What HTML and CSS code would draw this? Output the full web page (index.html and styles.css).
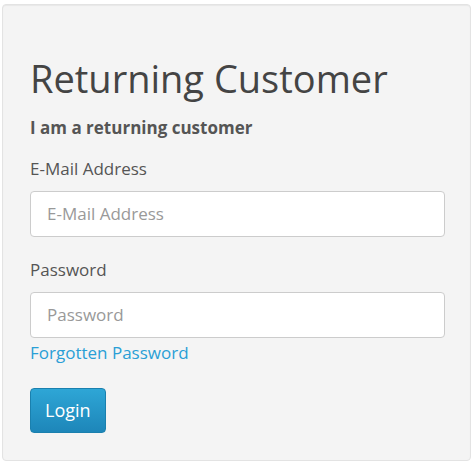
FILE: index.html
```html
<!DOCTYPE html>
<html lang="en">
<head>
    <meta charset="UTF-8">
    <meta name="viewport" content="width=device-width, initial-scale=1.0">
    <title>Returning Customer</title>
    <link rel="stylesheet" href="styles.css">
</head>
<body>
    <!-- Bloc client existant -->
    <div class="well">
        <h2>Returning Customer</h2>
        <p class="lead"><strong>I am a returning customer</strong></p>
        <form>
            <div class="form-group">
                <label for="input-email">E-Mail Address</label>
                <input type="text" id="input-email" placeholder="E-Mail Address">
            </div>
            <div class="form-group">
                <label for="input-password">Password</label>
                <input type="password" id="input-password" placeholder="Password">
                <a href="#" class="forgot">Forgotten Password</a>
            </div>
            <button type="button" class="btn">Login</button>
        </form>
    </div>
</body>
</html>
```

FILE: styles.css
```css
/* Base */
body, html {
    margin: 0;
    padding: 0;
    background: #fff;
    font-family: "Open Sans", sans-serif;
    color: #555;
}

body {
    padding: 4px 3px 2px 2px;
}

/* Bloc */
.well {
    background-color: #f4f4f4;
    border: 1px solid #e3e3e3;
    border-radius: 4px;
    box-shadow: inset 0 1px 1px rgba(0, 0, 0, 0.05);
    padding: 53px 25px 25px 27px;
    height: 377px;
}

h2 {
    font-size: 38px;
    font-weight: 400;
    color: #444;
    margin: 0;
    line-height: 1.1;
}

.lead {
    font-size: 17px;
    margin: 16px 0 0 0;
    line-height: 24px;
}

/* Formulaire */
.form-group {
    display: flex;
    flex-direction: column;
    margin-top: 17px;
}

.form-group + .form-group {
    margin-top: 21px;
}

label {
    font-size: 17px;
    line-height: 24px;
    margin-bottom: 10px;
}

input {
    height: 46px;
    box-sizing: border-box;
    border: 1px solid #ccc;
    border-radius: 4px;
    background: #fff;
    padding: 0 16px;
    font-family: "Open Sans", sans-serif;
    font-size: 17px;
    color: #555;
}

input::placeholder {
    color: #999;
}

.forgot {
    font-size: 17px;
    line-height: 24px;
    color: #2a9fd6;
    text-decoration: none;
    align-self: flex-start;
    margin-top: 3px;
}

.btn {
    margin-top: 23px;
    height: 45px;
    padding: 0 14px;
    border: 1px solid #1a80ae;
    border-radius: 4px;
    background: linear-gradient(#2ea6d6, #1d86b9);
    color: #fff;
    font-family: "Open Sans", sans-serif;
    font-size: 18px;
}
```
